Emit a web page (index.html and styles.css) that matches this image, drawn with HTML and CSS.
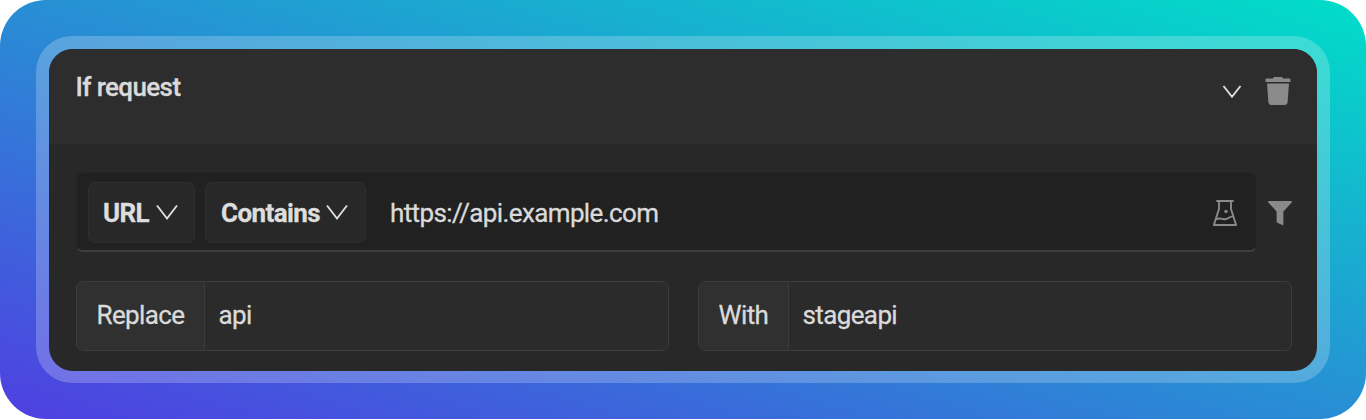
FILE: index.html
```html
<!DOCTYPE html>
<html lang="en">
<head>
  <meta charset="UTF-8" />
  <title>Replace Rule</title>
  <link rel="stylesheet" href="styles.css">
</head>
<body>
  <div class="backdrop">
    <div class="frame">
      <div class="card">
        <div class="card-header">
          <span class="title">If request</span>
          <div class="header-actions">
            <svg class="icon-collapse" width="20" height="16" viewBox="0 0 20 16">
              <path d="M1.5 2 L10 12.8 L18.5 2" fill="none" stroke="#dedede" stroke-width="1.9" />
            </svg>
            <svg class="icon-trash" width="26" height="30" viewBox="0 0 26 30">
              <path d="M1.5 2.4 H8 L9 1 H17 L18 2.4 H24.5 Q25.5 2.4 25.5 3.4 V6 H0.5 V3.4 Q0.5 2.4 1.5 2.4 Z M2 7.5 H24 L22.6 26.6 Q22.4 29 20 29 H6 Q3.6 29 3.4 26.6 Z" fill="#8a8a8b" />
            </svg>
          </div>
        </div>

        <div class="card-body">
          <div class="source-row">
            <div class="source-box">
              <button class="select select-url">URL
                <svg width="22" height="18" viewBox="0 0 22 18">
                  <path d="M1 1.5 L11 14.5 L21 1.5" fill="none" stroke="#dedede" stroke-width="1.9" />
                </svg>
              </button>
              <button class="select select-operator">Contains
                <svg width="22" height="18" viewBox="0 0 22 18">
                  <path d="M1 1.5 L11 14.5 L21 1.5" fill="none" stroke="#dedede" stroke-width="1.9" />
                </svg>
              </button>
              <span class="source-value">https://api.example.com</span>
              <svg class="icon-flask" width="26" height="28" viewBox="0 0 26 28">
                <g fill="none" stroke="#8a8a8a" stroke-width="1.9" stroke-linejoin="round">
                  <path d="M4.3 2 H21.7 M7 2.5 V10 L1.9 26 H24.1 L19 10 V2.5" />
                  <path d="M4.2 20.3 C8 18.2 10 20.3 13 20.3 C16.2 20.3 17 17.2 21.4 17.4" />
                </g>
                <circle cx="14" cy="12.4" r="1.7" fill="#8a8a8a" />
              </svg>
            </div>
            <svg class="icon-filter" width="26" height="26" viewBox="0 0 26 26">
              <path d="M1.8 1 H24.2 Q25.4 1.2 24.7 2.4 L16.4 11.6 V24.4 Q16.2 25.4 15.2 24.9 L10.4 22.7 Q9.6 22.2 9.6 21.4 V11.6 L1.3 2.4 Q0.6 1.2 1.8 1 Z" fill="#8a8a8b" />
            </svg>
          </div>

          <div class="replace-row">
            <div class="field">
              <label class="addon">Replace</label>
              <span class="value">api</span>
            </div>
            <div class="field">
              <label class="addon addon-with">With</label>
              <span class="value">stageapi</span>
            </div>
          </div>
        </div>
      </div>
    </div>
  </div>
</body>
</html>
```

FILE: styles.css
```css
* {
  box-sizing: border-box;
}
body {
  margin: 0;
  background: #fff;
  font-family: Roboto, sans-serif;
  font-size: 26px;
  line-height: 30px;
  letter-spacing: -0.62px;
  color: #dadada;
  -webkit-text-stroke: 0.3px #dadada;
}
svg {
  display: block;
  flex: none;
}
.backdrop {
  height: 419.4px;
  padding: 36px;
  border-radius: 46px;
  background: linear-gradient(to top right, #4f3fe1, #00dec8);
}
.frame {
  height: 347px;
  padding: 13px 13px 12px;
  border-radius: 36px;
  background: rgba(255, 255, 255, 0.22);
}
.card {
  height: 321.6px;
  border-radius: 24px;
  background: #282828;
  overflow: hidden;
}
.card-header {
  display: flex;
  justify-content: space-between;
  height: 95px;
  padding: 23px 26px 0 26.6px;
  background: #2d2d2d;
}
.title {
  font-weight: 500;
}
.header-actions {
  display: flex;
  align-items: flex-start;
  gap: 23px;
  padding-top: 4px;
}
.icon-collapse {
  margin-top: 8px;
}
.card-body {
  padding: 28px 25px 0 27px;
}
.source-row {
  display: flex;
  align-items: center;
  gap: 10px;
  margin-right: -1px;
}
.source-box {
  flex: 1;
  display: flex;
  align-items: center;
  height: 80px;
  padding: 2px 18px 0 11px;
  background: #212121;
  border: 1px solid #262626;
  border-bottom: 2px solid #3e3e3e;
  border-radius: 7px;
}
.select {
  display: flex;
  align-items: center;
  justify-content: space-between;
  height: 61px;
  padding: 0 16px 0 14px;
  margin-right: 10px;
  border: 1px solid #2f2f2f;
  border-radius: 7px;
  background: #282828;
  color: #dedede;
  font: inherit;
  font-weight: 700;
  letter-spacing: -0.6px;
}
.select-url {
  width: 107px;
}
.select-operator {
  width: 161px;
  padding-left: 15px;
  padding-right: 17px;
}
.source-value {
  flex: 1;
  margin-left: 14px;
}
.icon-filter {
  margin-top: 1px;
}
.replace-row {
  display: grid;
  grid-template-columns: 593px 594px;
  gap: 29px;
  margin-top: 29px;
}
.field {
  display: flex;
  height: 70px;
  border: 1px solid #3c3c3f;
  border-radius: 7px;
  background: #2b2b2b;
  overflow: hidden;
}
.addon {
  width: 128px;
  padding: 18px 0 0 19.5px;
  border-right: 1px solid #3c3c3f;
  background: #303030;
}
.addon-with {
  width: 90px;
}
.value {
  padding: 18px 0 0 13.5px;
}
```
